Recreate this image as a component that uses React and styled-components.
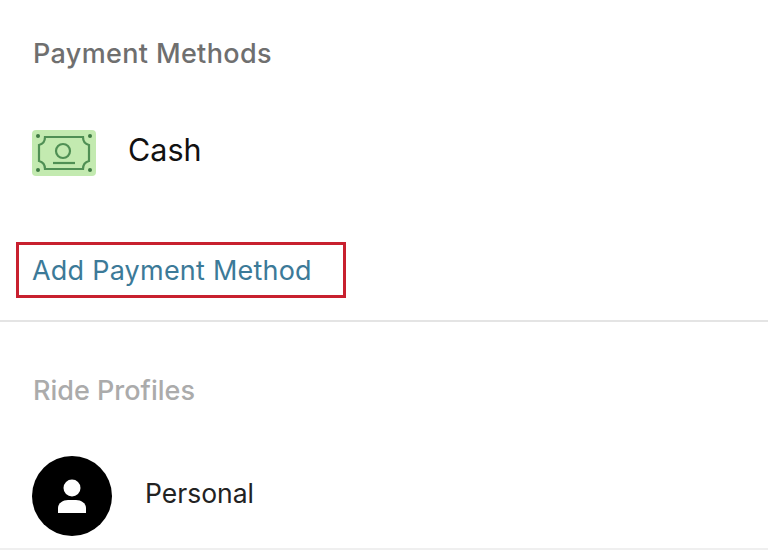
import React from "react";
import styled, { createGlobalStyle } from "styled-components";

const GlobalStyle = createGlobalStyle`
  html, body {
    margin: 0;
    padding: 0;
    background: #fff;
    font-family: "Inter", "Liberation Sans", sans-serif;
    overflow: hidden;
  }
`;

const Page = styled.div`
  width: 768px;
  height: 551px;
  display: flex;
  flex-direction: column;
  overflow: hidden;
`;

const Section = styled.section`
  display: flex;
  flex-direction: column;
  padding: ${(props) => props.$top || 0}px 0 0 33px;
`;

const Heading = styled.h2`
  margin: 0;
  font-size: 27px;
  line-height: 30px;
  font-weight: 500;
  letter-spacing: ${(props) => props.$spacing}px;
  color: ${(props) => props.color};
`;

const PaymentRow = styled.div`
  display: flex;
  align-items: center;
  gap: 32px;
  margin-top: 61px;
  margin-left: -1px;
`;

const CashLabel = styled.span`
  font-size: 30.5px;
  line-height: 36px;
  padding-bottom: 7px;
  color: #111;
`;

const AddBox = styled.div`
  box-sizing: border-box;
  width: 330px;
  height: 56px;
  margin: 66px 0 0 -17px;
  padding-left: 13px;
  display: flex;
  align-items: center;
  border: 3px solid #c8202f;
`;

const AddLink = styled.a`
  font-size: 27px;
  letter-spacing: 0.22px;
  color: #3c7a98;
`;

const Divider = styled.div`
  height: 2px;
  margin-top: 22px;
  background: #e4e4e4;
`;

const ProfileRow = styled.div`
  display: flex;
  align-items: center;
  gap: 33px;
  margin-top: 50px;
  margin-left: -1px;
`;

const Avatar = styled.div`
  width: 80px;
  height: 80px;
  border-radius: 50%;
  background: #000;
  display: flex;
  align-items: center;
  justify-content: center;
`;

const ProfileLabel = styled.span`
  font-size: 26.5px;
  line-height: 32px;
  padding-bottom: 6px;
  color: #222;
`;

const BottomLine = styled.div`
  height: 2px;
  margin-top: 12px;
  background: #efefef;
`;

const CashIcon = () => (
  <svg width="64" height="46" viewBox="0 0 64 46">
    <rect width="64" height="46" rx="4" fill="#c3eab0" />
    <g fill="none" stroke="#4f8f54" strokeWidth="2.2">
      <path d="M13 7H51C51 11 53 14 57 15V31C53 32 51 35 51 39H13C13 35 11 32 7 31V15C11 14 13 11 13 7Z" />
      <circle cx="31" cy="21" r="7" />
      <path d="M21 33H43" />
    </g>
    <g fill="#3f7a44">
      <circle cx="6" cy="6" r="2" />
      <circle cx="58" cy="6" r="2" />
      <circle cx="6" cy="40" r="2" />
      <circle cx="58" cy="40" r="2" />
    </g>
  </svg>
);

const PersonIcon = () => (
  <svg width="30" height="36" viewBox="0 0 30 36">
    <circle cx="15" cy="10" r="8.5" fill="#fff" />
    <path d="M1 35V30C1 25 6 22 11 22H19C24 22 29 25 29 30V35Z" fill="#fff" />
  </svg>
);

export default function App() {
  return (
    <Page>
      <GlobalStyle />
      <Section $top={39}>
        <Heading color="#6f6f6f" $spacing={0.35}>Payment Methods</Heading>
        <PaymentRow>
          <CashIcon />
          <CashLabel>Cash</CashLabel>
        </PaymentRow>
        <AddBox>
          <AddLink>Add Payment Method</AddLink>
        </AddBox>
      </Section>
      <Divider />
      <Section $top={54}>
        <Heading color="#ababab" $spacing={0}>Ride Profiles</Heading>
        <ProfileRow>
          <Avatar>
            <PersonIcon />
          </Avatar>
          <ProfileLabel>Personal</ProfileLabel>
        </ProfileRow>
      </Section>
      <BottomLine />
    </Page>
  );
}
